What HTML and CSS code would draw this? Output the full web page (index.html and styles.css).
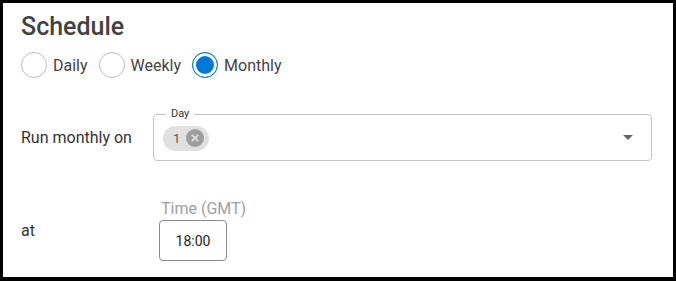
FILE: index.html
```html
<!DOCTYPE html>
<html>
<head>
    <title>Schedule</title>
    <link rel="stylesheet" href="styles.css">
</head>
<body>
    <div class="panel">
        <h2>Schedule</h2>
        <div class="radios">
            <label class="radio"><span class="circle"></span>Daily</label>
            <label class="radio"><span class="circle"></span>Weekly</label>
            <label class="radio checked"><span class="circle"></span>Monthly</label>
        </div>
        <div class="row day-row">
            <div class="label">Run monthly on</div>
            <div class="outlined">
                <span class="legend">Day</span>
                <span class="chip">1<span class="chip-x">
                    <svg width="18" height="18" viewBox="0 0 18 18"><circle cx="9" cy="9" r="9" fill="#9e9e9e"/><path d="M5.8 5.8L12.2 12.2M12.2 5.8L5.8 12.2" stroke="#e0e0e0" stroke-width="1.8"/></svg>
                </span></span>
                <svg class="arrow" width="10" height="5" viewBox="0 0 10 5"><path d="M0 0L10 0L5 5Z" fill="#666"/></svg>
            </div>
        </div>
        <div class="row time-row">
            <div class="label">at</div>
            <div class="time-group">
                <div class="time-label">Time (GMT)</div>
                <div class="time-box">18:00</div>
            </div>
        </div>
    </div>
</body>
</html>
```

FILE: styles.css
```css
html, body {
    margin: 0;
    background: #000;
}
body {
    font-family: Roboto, "Liberation Sans", sans-serif;
    color: #333;
    padding: 3px;
}
.panel {
    background: #fff;
    height: 264px;
    padding: 10px 21px 0 18px;
}
h2 {
    margin: 0;
    font-size: 25px;
    font-weight: 500;
    line-height: 28px;
    color: #424242;
}
.radios {
    display: flex;
    margin-top: 11px;
}
.radio {
    display: flex;
    align-items: center;
    font-size: 16px;
    color: #444;
    margin-right: 11px;
}
.circle {
    box-sizing: border-box;
    width: 26px;
    height: 26px;
    border: 1px solid #bdbdbd;
    border-radius: 50%;
    margin-right: 6px;
}
.checked .circle {
    border: 1.5px solid #0078d7;
    background: #0078d7;
    box-shadow: inset 0 0 0 3px #fff;
}
.row {
    display: flex;
    align-items: center;
}
.label {
    width: 132px;
    font-size: 16px;
    color: #333;
}
.day-row {
    margin-top: 36px;
}
.outlined {
    position: relative;
    flex: 1;
    height: 47px;
    box-sizing: border-box;
    border: 1px solid #c4c4c4;
    border-radius: 4px;
    display: flex;
    align-items: center;
    padding: 0 18px 0 9px;
}
.legend {
    position: absolute;
    top: -8px;
    left: 12px;
    padding: 0 5px;
    background: #fff;
    font-size: 11px;
    line-height: 14px;
    color: #333;
}
.chip {
    display: flex;
    align-items: center;
    height: 25px;
    padding: 0 5px 0 10px;
    border-radius: 13px;
    background: #e0e0e0;
    font-size: 13px;
    color: #555;
    margin-top: 1px;
}
.chip-x {
    display: flex;
    margin-left: 6px;
}
.arrow {
    margin-left: auto;
}
.time-row {
    margin-top: 38px;
}
.time-group {
    padding-left: 6px;
}
.time-label {
    font-size: 16px;
    line-height: 19px;
    color: #a0a0a0;
    padding-left: 2px;
    margin-bottom: 2px;
}
.time-box {
    box-sizing: border-box;
    width: 68px;
    height: 41px;
    border: 1px solid #8a8a8a;
    border-radius: 4px;
    display: flex;
    align-items: center;
    justify-content: center;
    font-size: 14px;
    color: #222;
}
```
